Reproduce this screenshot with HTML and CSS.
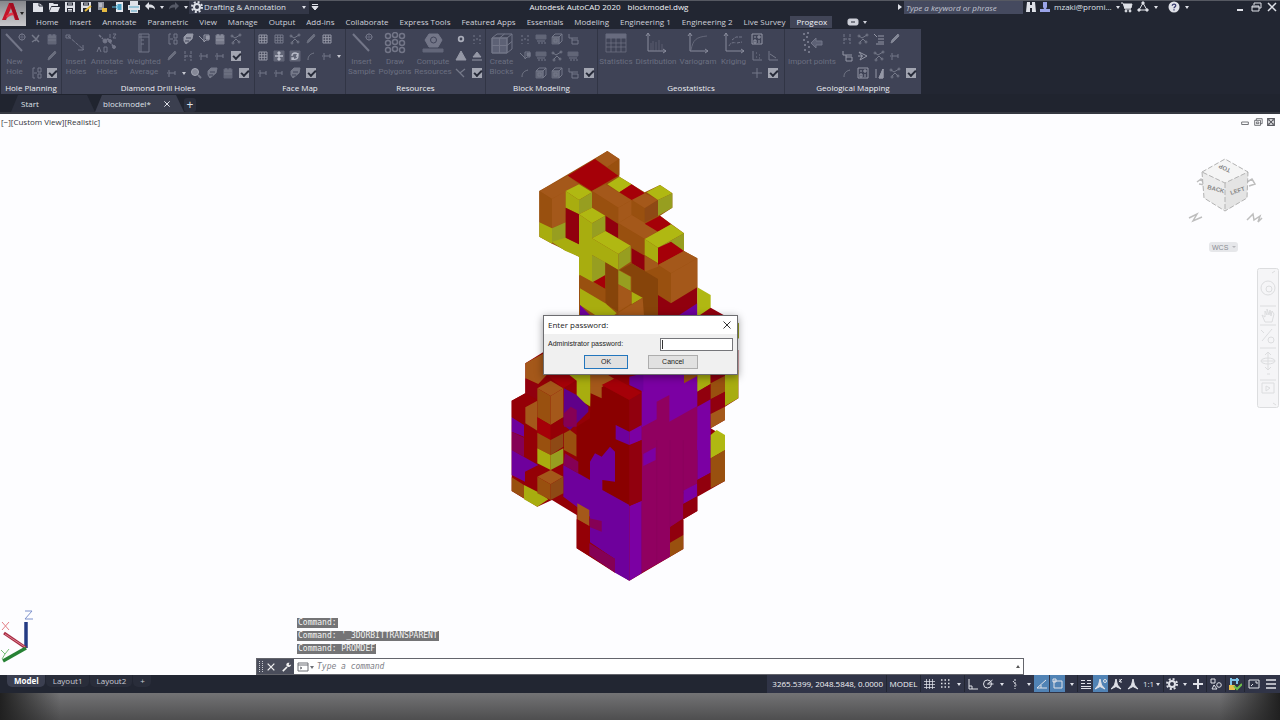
FILE: index.html
```html
<!DOCTYPE html>
<html lang="en">
<head>
<meta charset="utf-8">
<title>Autodesk AutoCAD 2020 - blockmodel.dwg</title>
<link rel="stylesheet" href="styles.css">
</head>
<body>
<svg class="defs" aria-hidden="true">
  <symbol id="i-new" viewBox="0 0 12 12"><path d="M1 2h6l4 3v6H1z" fill="currentColor" stroke="none"/><path d="M7 2v3h4" stroke="#222632"/></symbol>
  <symbol id="i-open" viewBox="0 0 12 12"><path d="M1 10V2h4l1 1h4v2H3.500z M3.500 6H12l-2 5H1.500z" fill="currentColor" stroke="none"/></symbol>
  <symbol id="i-save" viewBox="0 0 12 12"><path d="M1 1h10v10H1z" fill="currentColor" stroke="none"/><path d="M3 1.500h6v3H3zM3 7h6v4H3z" fill="#222632" stroke="none"/><path d="M4 8.500h4M4 10h4M4 3h4"/></symbol>
  <symbol id="i-saveas" viewBox="0 0 12 12"><path d="M1 1h10v10H1z" fill="currentColor" stroke="none"/><path d="M3 1.500h6v3H3zM3 7h6v4H3z" fill="#222632" stroke="none"/><path d="M4 3h4"/><path d="M5 10l6-5" stroke="#e2b83c" stroke-width="2"/></symbol>
  <symbol id="i-web" viewBox="0 0 12 12"><path d="M2 1h6v8H2z" fill="#8f93a0" stroke="none"/><path d="M3 3h3M3 5h3"/><path d="M6 7h5v4H6z" fill="#e6bb42" stroke="none"/></symbol>
  <symbol id="i-mobile" viewBox="0 0 12 12"><path d="M4 1h7v10H4z" fill="#e7e8ee" stroke="none"/><path d="M5.500 3h4v6h-4z" fill="#4aa3c9" stroke="none"/><path d="M0 6h6M4 4l2 2-2 2" stroke="#58b9dd"/></symbol>
  <symbol id="i-print" viewBox="0 0 12 12"><path d="M2 0h8v4H2zM0 4h12v5H0zM2 8h8v4H2z" fill="currentColor" stroke="none"/><path d="M1 6h10M3 10h6" stroke="#53a5c5"/></symbol>
  <symbol id="i-undo" viewBox="0 0 12 12"><path d="M1 5l4-4v2.500c4 0 6 2 6 5C9 6.500 7.500 6.500 5 6.500V9z" fill="currentColor" stroke="none"/></symbol>
  <symbol id="i-redo" viewBox="0 0 12 12"><path d="M11 5L7 1v2.500c-4 0-6 2-6 5 2-2 3.500-2 6-2V9z" fill="currentColor" stroke="none"/></symbol>
  <symbol id="i-gear" viewBox="0 0 12 12"><circle cx="6" cy="6" r="3" stroke-width="2"/><circle cx="6" cy="6" r="5" stroke-width="2" stroke-dasharray="2 1.930"/></symbol>
  <symbol id="i-caret" viewBox="0 0 6 6"><path d="M1 2h4L3 5z" fill="currentColor" stroke="none"/></symbol>
  <symbol id="i-custom" viewBox="0 0 8 8"><path d="M1 1.500h6M1 3.500h6L4 7z" fill="currentColor"/></symbol>
  <symbol id="i-right" viewBox="0 0 6 8"><path d="M1 1l4 3-4 3z" fill="currentColor" stroke="none"/></symbol>
  <symbol id="i-bino" viewBox="0 0 12 12"><path d="M2 1h3v3h2V1h3l1 10H7V7H5v4H1z" fill="currentColor" stroke="none"/></symbol>
  <symbol id="i-user" viewBox="0 0 12 12"><path d="M4 1h4v5l-1 2h4v3H1V8h4L4 6z" fill="#9aa3e8" stroke="none"/></symbol>
  <symbol id="i-cart" viewBox="0 0 12 12"><path d="M0 2h2l2 6h6"/><path d="M3 3h8l-1 4H4z" fill="currentColor"/><circle cx="5" cy="10" r="1" fill="currentColor"/><circle cx="9" cy="10" r="1" fill="currentColor"/></symbol>
  <symbol id="i-app" viewBox="0 0 12 12"><path d="M6 2L2 9h8z"/><path d="M5 1h2v2H5zM1 8h2v2H1zM9 8h2v2H9z" fill="currentColor"/></symbol>
  <symbol id="i-help" viewBox="0 0 12 12"><circle cx="6" cy="6" r="5.500" fill="currentColor" stroke="none"/><path d="M4.300 4.800C4.300 2.500 8 2.700 7.700 4.800 7.500 6 6 5.800 6 7.300M6 8.300v1.200" stroke="#393d70" stroke-width="1.300"/></symbol>
  <symbol id="i-min" viewBox="0 0 12 12"><path d="M3 9h6" stroke-width="2"/></symbol>
  <symbol id="i-restore" viewBox="0 0 12 12"><path d="M4 4V2h7v5H9M2 5h7v5H2zM2 6h7"/></symbol>
  <symbol id="i-x" viewBox="0 0 12 12"><path d="M2 2l8 8M10 2l-8 8" stroke-width="1.500"/></symbol>
  <symbol id="i-video" viewBox="0 0 12 12"><rect x="1" y="3" width="10" height="6" rx="1.500" fill="currentColor"/><path d="M4 6h4" stroke="#222632"/></symbol>

  <symbol id="b-line" viewBox="0 0 22 22"><path d="M2 2l16 17" stroke-width="2"/><circle cx="18" cy="5" r="3"/><path d="M18 1v8M14 5h8" opacity=".6"/></symbol>
  <symbol id="b-insert" viewBox="0 0 22 22"><path d="M3 4l16 14" stroke-dasharray="4 1"/><path d="M1 3h4v3H1zM18 13v5h-5"/></symbol>
  <symbol id="b-annot" viewBox="0 0 22 22"><path d="M3 3l4 4M7 9l5-2 5 7" stroke-width="1.500" stroke-dasharray="3 1"/><circle cx="9" cy="9" r="2" fill="currentColor"/><circle cx="14" cy="9" r="1.500" fill="currentColor"/><circle cx="18" cy="15" r="1.500" fill="currentColor"/><path d="M14 2v4M17 2h3l-3 4h3M1 20l2-5 2 5M8 15v5h3v-5z"/></symbol>
  <symbol id="b-weight" viewBox="0 0 22 22"><path d="M6 2h10v18H6zM6 5h10M8 2v18M8 8h3M8 12h3"/></symbol>
  <symbol id="b-poly" viewBox="0 0 22 22"><g stroke-width="1.500"><circle cx="4" cy="4" r="2.500"/><circle cx="11" cy="3" r="2.500"/><circle cx="18" cy="4" r="2.500"/><circle cx="4" cy="11" r="2.500"/><circle cx="11" cy="10" r="2.500"/><circle cx="18" cy="11" r="2.500"/><circle cx="4" cy="18" r="2.500"/><circle cx="11" cy="17" r="2.500"/><circle cx="18" cy="18" r="2.500"/></g></symbol>
  <symbol id="b-compute" viewBox="0 0 22 22"><path d="M7 2h9l4 6-4 7H7L3 8z" fill="currentColor"/><circle cx="11.500" cy="8" r="3" stroke="#404459"/><path d="M1 17h20v3H1z" fill="currentColor" opacity=".7"/></symbol>
  <symbol id="b-blocks" viewBox="0 0 22 22"><path d="M1 6h15v15H1z" fill="#5d6175"/><path d="M1 6h15v15H1zM8.500 6v15M1 13.500h15M1 6l5-4h15l-5 4M21 2v15l-5 4M8.500 6l5-4M16 13.500l5-4"/></symbol>
  <symbol id="b-table" viewBox="0 0 22 22"><path d="M1 2h20v4H1z" fill="currentColor" opacity=".8"/><path d="M1 6v14h20V6M6 6v14M11 6v14M16 6v14M1 11h20M1 15h20" opacity=".7"/></symbol>
  <symbol id="b-dist" viewBox="0 0 22 22"><path d="M3 1v18h18M1 4l2-3 2 3M18 17l3 2-3 2" stroke="#898c9c"/><path d="M6 19v-8M8 19V9M11 19v-9M14 19V8M17 19v-7" opacity=".5"/></symbol>
  <symbol id="b-vario" viewBox="0 0 22 22"><path d="M3 1v18h18M1 4l2-3 2 3M18 17l3 2-3 2" stroke="#898c9c"/><path d="M4 18C6 8 9 5 20 4" opacity=".7"/></symbol>
  <symbol id="b-krig" viewBox="0 0 22 22"><path d="M3 1v18h18M1 4l2-3 2 3M18 17l3 2-3 2" stroke="#898c9c"/><path d="M6 14c1-3 4-4 7-3M9 8l4-3h7M14 11l5-1" stroke-dasharray="3 1"/></symbol>
  <symbol id="b-import" viewBox="0 0 22 22"><path d="M2 2h2M5 5h2M2 8h2M6 10h2M3 13h2M7 15h2M3 18h2M7 20h2M6 1h2" stroke-width="2"/><path d="M21 9h-6V6l-5 5 5 5v-3h6z" fill="#5d6175"/></symbol>

  <symbol id="s-grid" viewBox="0 0 12 12"><path d="M2 2h8v8H2zM4.700 2v8M7.300 2v8M2 4.700h8M2 7.300h8"/></symbol>
  <symbol id="s-sheet" viewBox="0 0 12 12"><path d="M2 2h8v9H2z" fill="currentColor" opacity=".65"/><path d="M2 4h8M4 1v2M8 1v2M2 7h8"/></symbol>
  <symbol id="s-cut" viewBox="0 0 12 12"><path d="M2 2l7 7M9 2L5 8M2 9l3-2" stroke-width="1.500"/></symbol>
  <symbol id="s-pen" viewBox="0 0 12 12"><path d="M2 10l1-3 6-6 1 2-6 6z" fill="currentColor" opacity=".8"/></symbol>
  <symbol id="s-strip" viewBox="0 0 12 12"><path d="M5 1H3v10h2M8 1h3v4H8zM8 7h3v4H8zM4 6h3"/></symbol>
  <symbol id="s-leaf" viewBox="0 0 12 12"><path d="M2 4l3-3h6l-1 5-6 5-2-3z" fill="currentColor"/><path d="M4 5h5M3 8h4" stroke="#404459"/></symbol>
  <symbol id="s-flag" viewBox="0 0 12 12"><path d="M1 3l5 5M6 2h5v5H8L6 9z"/><path d="M8 3h3v3H8z" fill="currentColor"/></symbol>
  <symbol id="s-nodes" viewBox="0 0 12 12"><path d="M2 3l3 2 5-3M3 9l3-3 3 3" /><circle cx="2" cy="3" r="1"/><circle cx="10" cy="2" r="1"/><circle cx="3" cy="10" r="1"/><circle cx="9" cy="9" r="1"/></symbol>
  <symbol id="s-split" viewBox="0 0 12 12"><path d="M3 1v10M9 1v10M3 6h6" stroke-dasharray="3 1"/></symbol>
  <symbol id="s-move" viewBox="0 0 12 12"><path d="M1 1h10v10H1z" fill="currentColor" opacity=".4"/><path d="M6 2v8M2 6h8M4.500 3.500L6 2l1.500 1.500M4.500 8.500L6 10l1.500-1.500" stroke="#b8bbc8" stroke-width="1.500"/></symbol>
  <symbol id="s-rot" viewBox="0 0 12 12"><path d="M1 1h10v10H1z" fill="currentColor" opacity=".4"/><path d="M3 6c0-4 6-4 6 0M9 7c-1 3-5 3-6 1M9 3v3H7M3 10V8h2" stroke="#b8bbc8" stroke-width="1.300"/></symbol>
  <symbol id="s-zoom" viewBox="0 0 12 12"><circle cx="5" cy="5" r="3.500" fill="#858897" stroke="#a3a6b3"/><path d="M8 8l3 3" stroke-width="2"/></symbol>
  <symbol id="s-cube" viewBox="0 0 12 12"><path d="M1 4h7v7H1z" fill="currentColor" opacity=".7"/><path d="M1 4l3-3h7v7l-3 3V4zM8 4l3-3M3 6h3v3H3z"/></symbol>
  <symbol id="s-ring" viewBox="0 0 12 12"><circle cx="6" cy="6" r="2.300" stroke="#a9acb9" stroke-width="1.800"/></symbol>
  <symbol id="s-tri" viewBox="0 0 12 12"><path d="M6 1l5 9H1z" fill="currentColor"/></symbol>
  <symbol id="s-tri2" viewBox="0 0 12 12"><path d="M6 2l4 5H2zM1 10h10" fill="currentColor"/></symbol>
  <symbol id="s-branch" viewBox="0 0 12 12"><path d="M1 2l4 4 5-4M5 6l4 4" stroke-width="1.300"/></symbol>
  <symbol id="s-dots" viewBox="0 0 12 12"><path d="M3 2v9M9 2v9M5 6h2" stroke-dasharray="2 2"/></symbol>
  <symbol id="s-box" viewBox="0 0 12 12"><path d="M1 2h10v4H1z" fill="currentColor" opacity=".65"/><path d="M2 8h8M4 9v2M7 9v2M10 9v2"/></symbol>
  <symbol id="s-label" viewBox="0 0 12 12"><path d="M2 1v4h3M5 7h6v4H5zM5 7V5h6"/></symbol>
  <symbol id="s-bin" viewBox="0 0 12 12"><path d="M1 1h10v10H1zM4 3v2M7 3h2v2H7zM3 7h2v3H3zM8 7v3"/></symbol>
  <symbol id="s-axis" viewBox="0 0 12 12"><path d="M2 1v9h9M5 7h1M8 5h1M5 3h1M8 8h1"/></symbol>
  <symbol id="s-axis2" viewBox="0 0 12 12"><path d="M2 1v9h9M3 4l6 4"/></symbol>
  <symbol id="s-cross" viewBox="0 0 12 12"><path d="M6 1v10M1 6h10"/></symbol>
  <symbol id="s-list" viewBox="0 0 12 12"><path d="M1 1l3 3M5 3h6M5 6h6M5 9h6M3 11h8"/></symbol>
  <symbol id="s-arrow" viewBox="0 0 12 12"><path d="M2 2l8 4-7 4 2-4zM1 6h5" /></symbol>
  <symbol id="s-peak" viewBox="0 0 12 12"><path d="M10 2v9H6zM3 2v9"/><path d="M10 2v9H6z" fill="currentColor"/></symbol>
  <symbol id="s-curve" viewBox="0 0 12 12"><path d="M3 10c0-4 2-6 6-7"/></symbol>
  <symbol id="s-h" viewBox="0 0 12 12"><path d="M3 3v7M3 6h6M9 4v4M1 6h1"/></symbol>

  <symbol id="t-grid" viewBox="0 0 12 12"><path d="M3.500 1v10M6.500 1v10M9.500 1v10M1 3.500h11M1 6.500h11M1 9.500h11" opacity=".75"/></symbol>
  <symbol id="t-dots" viewBox="0 0 12 12"><path d="M2 2h9M2 5.500h9M2 9h9" stroke-dasharray="1.500 2" stroke-width="1.500"/></symbol>
  <symbol id="t-ortho" viewBox="0 0 12 12"><path d="M2 1v10h9M2 8h3v3"/></symbol>
  <symbol id="t-polar" viewBox="0 0 12 12"><circle cx="5.500" cy="6" r="4"/><path d="M5.500 6h6M5.500 6l5-4"/></symbol>
  <symbol id="t-iso" viewBox="0 0 12 12"><path d="M6 1v10M4 3l4 5" stroke-dasharray="2 1"/></symbol>
  <symbol id="t-track" viewBox="0 0 12 12"><path d="M1 10h10M1 10l9-8M5 7v3"/></symbol>
  <symbol id="t-osnap" viewBox="0 0 12 12"><path d="M2 3h8v7H2zM1 1h3v3H1z"/></symbol>
  <symbol id="t-lines" viewBox="0 0 12 12"><path d="M1 2.500h4M1 5.500h4M1 8.500h4M7 2.500h4M7 5.500h4M5 8.500h6"/><path d="M1 10.500h10"/></symbol>
  <symbol id="t-anno" viewBox="0 0 12 12"><path d="M6 1l1.500 6L11 11 6 8.500 1 11l3.500-4z" fill="currentColor"/></symbol>
  <symbol id="t-anno2" viewBox="0 0 12 12"><path d="M5 1l1.500 6L10 11 5 8.500 0 11l3.500-4z" fill="currentColor"/><circle cx="10" cy="3" r="1.500"/></symbol>
  <symbol id="t-anno3" viewBox="0 0 12 12"><path d="M5 1l1.500 6L10 11 5 8.500 0 11l3.500-4z" fill="currentColor"/><path d="M8 4l3-3M9 1v3h2"/></symbol>
  <symbol id="t-shapes" viewBox="0 0 12 12"><path d="M1 1h4v4H1zM4 7l3 4H2z"/><circle cx="9" cy="7" r="2.300"/></symbol>
  <symbol id="t-perf" viewBox="0 0 14 14"><path d="M2 3h9M3 1v12M9 1v6" stroke="#7ec3e8" stroke-width="2"/><path d="M1 8h6v5H1z" fill="#e7bf4d" stroke="none"/><path d="M6 9l3 3 5-5" stroke="#6cc04a" stroke-width="2"/></symbol>
  <symbol id="t-full" viewBox="0 0 12 12"><path d="M1 2h10v8H1zM3 8l2-2M7 4h2v2"/></symbol>
  <symbol id="t-menu" viewBox="0 0 12 12"><path d="M1 2h10M1 6h10M1 10h10" stroke-width="1.500"/></symbol>
  <symbol id="t-wrench" viewBox="0 0 12 12"><path d="M1 11l5-5" stroke-width="2"/><path d="M7 1c-3 1-2 5 1 5 2 0 3-2 3-3L9 4 8 3l1-2z" fill="currentColor" stroke="none"/></symbol>
</svg>

<header class="top">
  <button class="logo" aria-label="Application menu">
    <svg class="logo-mark" viewBox="0 0 26 26"><path d="M2 19L9 2h4l6 17h-4l-4-12-5 12z" fill="#c4152b"/><path d="M6 15c4-4 7-4 9-3l1 3c-4-2-7 0-9 2z" fill="#e2384a"/><path d="M9 2h4l6 17h-3z" fill="#a10d20"/><path d="M20 11h4l-2 3z" fill="#222"/></svg>
  </button>
  <div class="titlebar">
    <div class="quick">
      <button aria-label="New"><svg><use href="#i-new"/></svg></button>
      <button aria-label="Open"><svg><use href="#i-open"/></svg></button>
      <button aria-label="Save"><svg><use href="#i-save"/></svg></button>
      <button aria-label="Save as"><svg><use href="#i-saveas"/></svg></button>
      <button aria-label="Open from web"><svg><use href="#i-web"/></svg></button>
      <button aria-label="Save to mobile"><svg><use href="#i-mobile"/></svg></button>
      <button aria-label="Plot"><svg><use href="#i-print"/></svg></button>
      <button aria-label="Undo"><svg><use href="#i-undo"/></svg></button>
      <button class="drop" aria-label="Undo list"><svg><use href="#i-caret"/></svg></button>
      <button class="faded" aria-label="Redo"><svg><use href="#i-redo"/></svg></button>
      <button class="drop" aria-label="Redo list"><svg><use href="#i-caret"/></svg></button>
      <label class="workspace"><svg><use href="#i-gear"/></svg>
        <select aria-label="Workspace"><option>Drafting &amp; Annotation</option></select>
        <svg class="tiny"><use href="#i-caret"/></svg></label>
      <button class="drop" aria-label="Customize"><svg class="eight"><use href="#i-custom"/></svg></button>
    </div>
    <h1 class="title"><span>Autodesk AutoCAD 2020</span><span>blockmodel.dwg</span></h1>
    <div class="info">
      <button class="drop" aria-label="Collapse search"><svg class="eight"><use href="#i-right"/></svg></button>
      <input class="search" type="search" placeholder="Type a keyword or phrase" aria-label="Search">
      <button aria-label="Find"><svg><use href="#i-bino"/></svg></button>
      <button class="account"><svg><use href="#i-user"/></svg><span>mzaki@promi...</span><svg class="tiny"><use href="#i-caret"/></svg></button>
      <button aria-label="Store"><svg><use href="#i-cart"/></svg></button>
      <button aria-label="App store"><svg><use href="#i-app"/></svg></button>
      <button class="drop" aria-label="App list"><svg><use href="#i-caret"/></svg></button>
      <button class="help" aria-label="Help"><svg><use href="#i-help"/></svg></button>
      <button class="drop" aria-label="Help list"><svg><use href="#i-caret"/></svg></button>
      <div class="window">
        <button aria-label="Minimize"><svg><use href="#i-min"/></svg></button>
        <button aria-label="Restore"><svg><use href="#i-restore"/></svg></button>
        <button aria-label="Close"><svg><use href="#i-x"/></svg></button>
      </div>
    </div>
  </div>
  <nav class="tabs">
    <button>Home</button><button>Insert</button><button>Annotate</button><button>Parametric</button><button>View</button><button>Manage</button><button>Output</button><button>Add-ins</button><button>Collaborate</button><button>Express Tools</button><button>Featured Apps</button><button>Essentials</button><button>Modeling</button><button>Engineering 1</button><button>Engineering 2</button><button>Live Survey</button><button class="active">Progeox</button>
    <button class="media" aria-label="Ribbon display"><svg><use href="#i-video"/></svg><svg class="tiny"><use href="#i-caret"/></svg></button>
  </nav>
</header>

<section class="ribbon">
  <section class="panel p-hole">
    <div class="tools">
      <button class="big w27"><svg><use href="#b-line"/></svg>New<br>Hole</button>
      <div class="small">
        <div><button aria-label="Trim"><svg><use href="#s-cut"/></svg></button><button aria-label="Sheet"><svg><use href="#s-sheet"/></svg></button></div>
        <div class="end"><button aria-label="Edit"><svg><use href="#s-pen"/></svg></button></div>
        <div><button aria-label="List"><svg><use href="#s-strip"/></svg></button><input type="checkbox" checked aria-label="Hole planning options"></div>
      </div>
    </div>
    <h2>Hole Planning</h2>
  </section>
  <section class="panel p-drill">
    <div class="tools">
      <button class="big w28"><svg><use href="#b-insert"/></svg>Insert<br>Holes</button>
      <button class="big w34"><svg><use href="#b-annot"/></svg>Annotate<br>Holes</button>
      <button class="big w40"><svg><use href="#b-weight"/></svg>Weighted<br>Average</button>
      <div class="small">
        <div><button aria-label="Strip log"><svg><use href="#s-strip"/></svg></button><button class="lit" aria-label="Layers"><svg><use href="#s-leaf"/></svg></button><button class="lit" aria-label="Flag"><svg><use href="#s-flag"/></svg></button><button class="lit" aria-label="Sheet"><svg><use href="#s-sheet"/></svg></button><button aria-label="Nodes"><svg><use href="#s-nodes"/></svg></button></div>
        <div><button aria-label="Edit"><svg><use href="#s-pen"/></svg></button><button aria-label="Columns"><svg><use href="#s-split"/></svg></button><button aria-label="Join"><svg><use href="#s-h"/></svg></button><button aria-label="Detach"><svg><use href="#s-h"/></svg></button><input type="checkbox" checked aria-label="Show traces"></div>
        <div><button aria-label="Dash"><svg><use href="#s-h"/></svg></button><button class="drop" aria-label="Dash list"><svg><use href="#i-caret"/></svg></button><button aria-label="Zoom"><svg><use href="#s-zoom"/></svg></button><button aria-label="Surface"><svg><use href="#s-leaf"/></svg></button><button aria-label="Report"><svg><use href="#s-sheet"/></svg></button><input type="checkbox" checked aria-label="Drill hole options"></div>
      </div>
    </div>
    <h2>Diamond Drill Holes</h2>
  </section>
  <section class="panel p-face">
    <div class="tools">
      <div class="small">
        <div><button class="lit" aria-label="Grid"><svg><use href="#s-grid"/></svg></button><button aria-label="Grid lines"><svg><use href="#s-grid"/></svg></button><button aria-label="Grid angle"><svg><use href="#s-nodes"/></svg></button><button aria-label="Draw"><svg><use href="#s-pen"/></svg></button><button class="lit" aria-label="Cells"><svg><use href="#s-grid"/></svg></button></div>
        <div><button class="lit" aria-label="Table"><svg><use href="#s-grid"/></svg></button><button class="lit" aria-label="Move"><svg><use href="#s-move"/></svg></button><button class="lit" aria-label="Rotate"><svg><use href="#s-rot"/></svg></button><button aria-label="Split"><svg><use href="#s-curve"/></svg></button><button aria-label="Line"><svg><use href="#s-h"/></svg></button><button class="drop" aria-label="Line list"><svg><use href="#i-caret"/></svg></button></div>
        <div><button aria-label="Start"><svg><use href="#s-h"/></svg></button><button aria-label="End"><svg><use href="#s-h"/></svg></button><button aria-label="Face"><svg><use href="#s-leaf"/></svg></button><input type="checkbox" checked aria-label="Face map options"></div>
      </div>
    </div>
    <h2>Face Map</h2>
  </section>
  <section class="panel p-res">
    <div class="tools">
      <button class="big w31"><svg><use href="#b-line"/></svg>Insert<br>Sample</button>
      <button class="big w36"><svg><use href="#b-poly"/></svg>Draw<br>Polygons</button>
      <button class="big w40"><svg><use href="#b-compute"/></svg>Compute<br>Resources</button>
      <div class="small">
        <div><button aria-label="Ring"><svg><use href="#s-ring"/></svg></button><button aria-label="Points"><svg><use href="#s-dots"/></svg></button></div>
        <div><button class="lit" aria-label="Triangle"><svg><use href="#s-tri"/></svg></button><button class="lit" aria-label="Eject"><svg><use href="#s-tri2"/></svg></button></div>
        <div><button aria-label="Branch"><svg><use href="#s-branch"/></svg></button><input type="checkbox" checked aria-label="Resource options"></div>
      </div>
    </div>
    <h2>Resources</h2>
  </section>
  <section class="panel p-block">
    <div class="tools">
      <button class="big w31"><svg><use href="#b-blocks"/></svg>Create<br>Blocks</button>
      <div class="small">
        <div><button aria-label="Range"><svg><use href="#s-dots"/></svg></button><button aria-label="Box"><svg><use href="#s-box"/></svg></button><button aria-label="Cube"><svg><use href="#s-cube"/></svg></button><button aria-label="Label"><svg><use href="#s-label"/></svg></button></div>
        <div><button aria-label="Tag"><svg><use href="#s-flag"/></svg></button><button aria-label="Box values"><svg><use href="#s-box"/></svg></button><button aria-label="Vectors"><svg><use href="#s-nodes"/></svg></button><button aria-label="Link"><svg><use href="#s-box"/></svg></button></div>
        <div><button aria-label="Star"><svg><use href="#s-curve"/></svg></button><button aria-label="Solid"><svg><use href="#s-cube"/></svg></button><button aria-label="Shells"><svg><use href="#s-cube"/></svg></button><button aria-label="Column"><svg><use href="#s-label"/></svg></button><input type="checkbox" checked aria-label="Block options"></div>
      </div>
    </div>
    <h2>Block Modeling</h2>
  </section>
  <section class="panel p-geo">
    <div class="tools">
      <button class="big w36"><svg><use href="#b-table"/></svg>Statistics</button>
      <button class="big w44"><svg><use href="#b-dist"/></svg>Distribution</button>
      <button class="big w40"><svg><use href="#b-vario"/></svg>Variogram</button>
      <button class="big w31"><svg><use href="#b-krig"/></svg>Kriging</button>
      <div class="small">
        <div><button class="lit" aria-label="Indicator"><svg><use href="#s-bin"/></svg></button></div>
        <div><button aria-label="Scatter"><svg><use href="#s-axis"/></svg></button><button aria-label="Regression"><svg><use href="#s-axis2"/></svg></button></div>
        <div><button aria-label="Add"><svg><use href="#s-cross"/></svg></button><input type="checkbox" checked aria-label="Geostatistics options"></div>
      </div>
    </div>
    <h2>Geostatistics</h2>
  </section>
  <section class="panel p-map">
    <div class="tools">
      <button class="big w54"><svg><use href="#b-import"/></svg>Import points</button>
      <div class="small">
        <div><button aria-label="Fault"><svg><use href="#s-split"/></svg></button><button aria-label="Strike"><svg><use href="#s-nodes"/></svg></button><button class="lit" aria-label="Legend"><svg><use href="#s-list"/></svg></button><button class="lit" aria-label="Sketch"><svg><use href="#s-pen"/></svg></button></div>
        <div><button class="lit" aria-label="Annotate fault"><svg><use href="#s-label"/></svg></button><button class="lit" aria-label="Plane"><svg><use href="#s-arrow"/></svg></button><button aria-label="Dip"><svg><use href="#s-nodes"/></svg></button><button aria-label="Width"><svg><use href="#s-h"/></svg></button></div>
        <div><button aria-label="Curve"><svg><use href="#s-curve"/></svg></button><button class="lit" aria-label="Frame"><svg><use href="#s-bin"/></svg></button><button class="lit" aria-label="Mirror"><svg><use href="#s-peak"/></svg></button><button aria-label="Points"><svg><use href="#s-nodes"/></svg></button><input type="checkbox" checked aria-label="Mapping options"></div>
      </div>
    </div>
    <h2>Geological Mapping</h2>
  </section>
</section>

<nav class="files">
  <button class="file">Start</button>
  <button class="file active">blockmodel*<svg><use href="#i-x"/></svg></button>
  <button class="plus" aria-label="New drawing">+</button>
</nav>

<main class="viewport">
  <div class="viewbar">
    <span>[−][Custom View][Realistic]</span>
    <div class="viewbuttons">
      <button aria-label="Minimize view"><svg viewBox="0 0 12 12"><path d="M2 6h8v3H2z"/></svg></button>
      <button aria-label="Restore view"><svg viewBox="0 0 12 12"><path d="M2 4h7v6H2zM4 4V2h7v6H9M4 6h3v2H4z"/></svg></button>
      <button aria-label="Close view"><svg viewBox="0 0 12 12"><path d="M2 2h8v8H2zM3 3l6 6M9 3L3 9" stroke-width="1.400"/></svg></button>
    </div>
  </div>

  <svg class="model" viewBox="0 0 750 1320" role="img" aria-label="Block model">
    <g>
      <path class="o2" d="M118 138L322 18 358 42 358 95 434 142 480 120 517 145 517 188 480 212 552 265 552 318 592 340 592 540 237 540 237 335 156 296 118 275z"/>
      <path class="o1" d="M285 42L322 18 358 42 322 66z"/><path class="o2" d="M322 66L358 42 358 90z"/>
      <path class="r1" d="M203 92L285 42 355 92 275 138z"/>
      <path class="o1" d="M118 138L203 92 237 118 156 162z"/><path class="o2" d="M118 138L156 162 156 250 118 232z"/><path class="o1" d="M156 162L197 138 197 232 156 250z"/>
      <path class="y2" d="M118 232L156 250 156 296 118 275z"/><path class="y3" d="M156 250L197 232 197 318 156 292z"/>
      <path class="y2" d="M156 290L197 278 237 298 237 335 197 318z"/>
      <path class="y1" d="M197 138L237 118 276 142 237 165z"/><path class="y2" d="M197 138L237 165 237 208 197 188z"/><path class="y3" d="M237 165L276 142 276 188 237 208z"/>
      <path class="r3" d="M197 188L237 208 237 298 197 278z"/>
      <path class="o1" d="M276 138L316 118 395 165 355 188z"/><path class="o2" d="M276 138L355 188 355 235 276 190z"/>
      <path class="r3" d="M316 212L355 237 355 280 316 258z"/>
      <path class="y1" d="M322 118L358 95 395 118 358 142z"/><path class="r1" d="M358 142L395 118 434 145 400 168z"/>
      <path class="o1" d="M355 188L395 165 395 210 355 235z"/><path class="o1" d="M395 165L434 145 474 165 434 190z"/><path class="o2" d="M395 165L434 190 434 232 395 210z"/><path class="o3" d="M434 190L474 165 474 212 434 232z"/>
      <path class="y1" d="M440 142L480 120 517 145 474 165z"/><path class="y3" d="M474 165L517 145 517 188 474 212z"/>
      <path class="o1" d="M355 235L395 210 474 258 434 282z"/><path class="o2" d="M355 235L434 282 434 330 355 280z"/>
      <path class="r1" d="M434 236L480 212 513 238 474 260z"/>
      <path class="y1" d="M434 282L513 238 552 265 474 308z"/><path class="y2" d="M434 282L474 308 474 355 434 330z"/><path class="y3" d="M474 308L552 265 552 318 474 355z"/>
      <path class="r1" d="M474 308L513 290 552 318 474 360z"/>
      <path class="r3" d="M395 310L434 332 434 378 395 355z"/><path class="o1" d="M434 332L474 355 474 365 434 380z"/>
      <path class="o4" d="M360 375L395 355 513 425 474 450 474 540 395 540 395 395z"/>
      <path class="o1" d="M474 360L552 318 592 340 513 385z"/><path class="o2" d="M474 360L513 385 513 475 474 450z"/><path class="o1" d="M513 385L592 340 592 427 513 475z"/>
      <path class="y1" d="M237 208L276 188 316 212 276 235z"/><path class="y2" d="M237 208L276 235 276 412 237 390z"/><path class="y3" d="M276 235L316 212 316 258 276 280z"/>
      <path class="y1" d="M276 280L316 258 392 302 355 327z"/><path class="y2" d="M276 280L355 327 355 375 276 330z"/><path class="y3" d="M355 327L392 302 392 350 355 375z"/>
      <path class="y3" d="M276 330L316 352 316 400 276 412z"/>
      <path class="r1" d="M280 410L316 390 316 432z"/><path class="o4" d="M316 352L355 375 355 500 316 476z"/>
      <path class="o2" d="M240 390L316 432 316 476 240 430z"/>
      <path class="y3" d="M355 375L392 395 392 438 355 418z"/><path class="o1" d="M355 418L395 440 395 475 355 500z"/><path class="y2" d="M395 440L428 458 395 478z"/>
      <path class="y2" d="M240 430L316 475 350 505 316 530 240 480z"/><path class="p2" d="M240 480L290 530 240 530z"/>
      <path class="o1" d="M355 503L428 458 434 540 355 540z"/>
      <path class="r3" d="M474 450L513 475 592 427 592 540 474 540z"/><path class="p2" d="M530 515L592 475 592 540 530 540z"/>
      <path class="y1" d="M592 427L632 450 632 495 592 520z"/><path class="r3" d="M600 510L632 488 715 535 715 560 600 560z"/>
      <path class="y3" d="M705 540L717 533 717 580 705 585z"/>
    </g>
    <g transform="translate(0 495)">
      <path class="r2" d="M76 160L140 120 715 120 715 265 675 290 675 330 632 355 675 380 675 513 592 560 592 603 550 628 550 717 388 812 230 715 230 615 156 570 112 590 35 543 35 272 76 250z"/>
      <path class="o1" d="M76 160L140 125 140 195 115 222 76 205z"/><path class="r3" d="M76 205L115 225 115 270 76 250z"/>
      <path class="r1" d="M140 195L200 190 230 210 190 235z"/>
      <path class="y2" d="M196 185L272 185 272 290 230 265 230 212z"/>
      <path class="p3" d="M192 235L230 255 265 290 265 305 210 360 190 345z"/><path class="m2" d="M192 310L212 290 230 300 230 350 192 350z"/>
      <path class="r2" d="M35 272L76 250 112 272 76 292 76 345 35 322z"/>
      <path class="o1" d="M76 292L112 272 112 362 76 340z"/>
      <path class="p2" d="M35 322L72 345 72 380 35 365z"/><path class="m2" d="M35 365L72 383 72 440 35 420z"/>
      <path class="o1" d="M112 235L152 212 190 235 152 258z"/><path class="o2" d="M112 235L152 258 152 345 112 322z"/><path class="o1" d="M152 258L190 235 190 322 152 345z"/>
      <path class="r1" d="M112 322L152 345 152 390 112 368z"/><path class="r2" d="M152 345L190 322 190 370 152 390z"/>
      <path class="o2" d="M112 368L152 390 152 435 112 415z"/><path class="o3" d="M152 390L190 370 190 410 152 435z"/><path class="o2" d="M192 370L210 360 230 375 230 440 192 420z"/>
      <path class="r4" d="M272 250L305 225 388 270 388 585 307 540 307 510 270 510 230 485 230 350 270 325z"/>
      <path class="o1" d="M272 195L316 190 345 208 305 232 305 265 272 250z"/>
      <path class="r1" d="M305 225L345 205 425 248 388 270z"/><path class="r3" d="M388 270L425 248 425 345 388 365z"/>
      <path class="p1" d="M425 180L592 180 592 215 632 268 632 420 592 420 425 430z"/><path class="p2" d="M388 200L430 190 430 245 388 225z"/>
      <path class="m1" d="M425 352L470 328 470 275 508 255 508 335 592 288 592 520 550 545 550 625 510 652 510 740 425 788z"/>
      <path class="p2" d="M347 345L388 365 388 405 347 388z"/><path class="p1" d="M388 365L425 345 425 390 388 405z"/>
      <path class="o2" d="M552 192L592 190 592 198 552 220z"/><path class="y2" d="M592 190L632 190 632 222 592 245z"/><path class="r3" d="M592 245L632 222 632 268 592 290z"/>
      <path class="r3" d="M632 185L675 185 675 198 632 220z"/><path class="o2" d="M632 220L675 197 675 245 632 268z"/><path class="y2" d="M675 180L715 180 715 265 675 288z"/><path class="r3" d="M632 268L675 245 675 290 632 312z"/><path class="o1" d="M632 312L675 290 675 330 632 355z"/>
      <path class="y1" d="M632 375L650 360 675 375 675 420 632 445z"/>
    </g>
    <g transform="translate(0 885)">
      <path class="p2" d="M35 30L115 75 75 95 75 125 35 105z"/><path class="o2" d="M35 112L72 135 72 175 35 153z"/><path class="y2" d="M72 135L112 155 145 178 112 200 72 178z"/>
      <path class="y2" d="M112 25L152 45 152 90 112 70z"/><path class="y3" d="M152 45L190 25 190 70 152 90z"/>
      <path class="m2" d="M195 40L235 65 235 100 190 75z"/>
      <path class="p2" d="M190 75L270 120 270 65 285 40 305 50 330 20 345 35 345 125 307 120 307 150 388 195 388 422 345 398 345 358 270 310 270 230 190 170z"/>
      <path class="p1" d="M388 198L425 182 425 400 388 422z"/><path class="r3" d="M388 18L425 0 425 182 388 198z"/>
      <path class="o1" d="M112 110L152 90 190 110 152 133z"/><path class="o2" d="M112 110L152 133 152 180 112 160z"/><path class="o3" d="M152 133L190 110 190 160 152 180z"/>
      <path class="o1" d="M232 190L268 210 268 258 232 238z"/><path class="m2" d="M268 235L305 243 305 275 270 262z"/>
      <path class="r2" d="M230 238L268 260 268 305 345 358 345 398 230 325z"/><path class="m2" d="M268 310L345 356 345 398 268 345z"/>
      <path class="p1" d="M430 42L467 22 467 60 430 78z"/><path class="p1" d="M592 0L632 0 632 98 592 120z"/><path class="p1" d="M550 152L592 130 592 168 550 192z"/>
      <path class="r3" d="M592 120L632 98 632 145 592 168zM550 192L592 170 592 213 550 238zM510 262L550 240 550 285 510 308z"/>
      <path class="o2" d="M510 308L550 285 550 327 510 350z"/><path class="y1" d="M632 0L675 0 675 30 632 55z"/><path class="o2" d="M632 55L675 30 675 123 632 145z"/>
      <path class="m3" d="M470 0V372M510 0V265M550 0V160"/>
    </g>
  </svg>

  <svg class="viewcube" viewBox="0 0 80 100" role="img" aria-label="View cube">
    <path d="M12 26l4-3 4 6-6-1M62 26l5-3 3 5-6 2" class="cube-mark"/>
    <path d="M17 16L40 3l23 13-23 11z" fill="#f5f5f5"/><path d="M17 16l23 11v28L19 42z" fill="#ececec"/><path d="M63 16L40 27v28l22-13z" fill="#e4e4e4"/>
    <path d="M17 16L40 3l23 13-23 11zM17 16l2 26 21 13 22-13 1-26M40 27v28" class="cube-edge"/>
    <text x="22" y="33" transform="rotate(14 22 33)">BACK</text><text x="46" y="39" transform="rotate(-18 46 39)">LEFT</text><text x="46" y="13" transform="rotate(205 46 13)">TOP</text>
    <path d="M4 62l8-4-4 7 9-4M62 64l6-6 1 6 6-4-2 6 4-4" class="cube-mark"/>
    <rect x="24" y="86" width="29" height="10" rx="3" fill="#e6e7ea"/><text class="wcs" x="27" y="94">WCS</text><path d="M47 90h4l-2 2z" fill="#b5b6ba"/>
  </svg>

  <svg class="navbar" viewBox="0 0 22 140" role="img" aria-label="Navigation bar">
    <rect x=".5" y=".5" width="21" height="139" rx="2"/><path d="M15 5l3-2M3 38h16M3 57h16M3 80h16M3 112h16"/><circle cx="11" cy="20" r="7"/><circle cx="12" cy="21" r="3"/><path d="M5 47l3 7h7l2-8-2-3-1 5-1-6-1 5-2-6v6l-2-4v6zM5 73l10-12M4 62l3 3"/><circle cx="14" cy="72" r="3"/><path d="M11 84v18M4 93h14M8 87l3-3 3 3M8 99l3 3 3-3"/><ellipse cx="11" cy="93" rx="7" ry="3"/><path d="M5 115h12v10H5zM9 118l4 2-4 3zM10 106h3M16 135l3 2"/>
  </svg>

  <svg class="ucs" viewBox="0 0 40 56" role="img" aria-label="UCS icon">
    <path d="M26 39V13" stroke="#243b84" stroke-width="3.500"/><path d="M26 39L4 24" stroke="#a72b42" stroke-width="3"/><path d="M26 39L3 52" stroke="#278235" stroke-width="3.500"/><path d="M25 38L5 25" stroke="#dc8293"/>
    <path d="M25 2h7l-7 8h8" stroke="#7d91cc"/><path d="M2 13l7 8M9 13l-7 8" stroke="#e47e85"/><path d="M1 41l4 4 4-5M5 45l-3 5" stroke="#75bf78"/>
  </svg>

  <form class="dialog" onsubmit="return false">
    <div class="dialog-title"><h2>Enter password:</h2><button type="button" class="dialog-x" aria-label="Close"><svg viewBox="0 0 12 12"><path d="M2.500 2.500l7 7M9.500 2.500l-7 7"/></svg></button></div>
    <div class="dialog-body">
      <div class="field"><label for="pw">Administrator password:</label><input id="pw" type="password"></div>
      <div class="actions"><button class="ok">OK</button><button type="button" class="cancel">Cancel</button></div>
    </div>
  </form>

  <div class="command">
    <div class="history"><span>Command:</span><span>Command: '_3DORBITTRANSPARENT</span><span>Command: PROMDEF</span></div>
    <div class="cmdline">
      <div class="handle"><i></i><button aria-label="Close command line"><svg><use href="#i-x"/></svg></button><button aria-label="Customize command line"><svg><use href="#t-wrench"/></svg></button></div>
      <button class="recent" aria-label="Recent commands"><svg viewBox="0 0 12 12"><path d="M1 2h10v8H1zM1 4h10M3 6l2 1-2 1"/></svg><svg class="tiny"><use href="#i-caret"/></svg></button>
      <input type="text" placeholder="Type a command" aria-label="Command">
      <button class="expand" aria-label="Expand history"><svg class="tiny up"><use href="#i-caret"/></svg></button>
    </div>
  </div>
</main>

<footer class="status">
  <nav class="layouts"><button class="active">Model</button><button>Layout1</button><button>Layout2</button><button>+</button></nav>
  <div class="state">
    <button class="coords">3265.5399, 2048.5848, 0.0000</button>
    <button class="space">MODEL</button>
    <button aria-label="Grid"><svg><use href="#t-grid"/></svg></button>
    <button aria-label="Snap"><svg><use href="#t-dots"/></svg></button>
    <button class="drop" aria-label="Snap list"><svg><use href="#i-caret"/></svg></button>
    <button class="rule" aria-label="Ortho"><svg><use href="#t-ortho"/></svg></button>
    <button aria-label="Polar"><svg><use href="#t-polar"/></svg></button>
    <button class="drop" aria-label="Polar list"><svg><use href="#i-caret"/></svg></button>
    <button aria-label="Isometric"><svg><use href="#t-iso"/></svg></button>
    <button class="drop" aria-label="Isometric list"><svg><use href="#i-caret"/></svg></button>
    <button class="on" aria-label="Tracking"><svg><use href="#t-track"/></svg></button>
    <button class="on" aria-label="Object snap"><svg><use href="#t-osnap"/></svg></button>
    <button class="drop" aria-label="Object snap list"><svg><use href="#i-caret"/></svg></button>
    <button class="rule" aria-label="Lineweight"><svg><use href="#t-lines"/></svg></button>
    <button class="on" aria-label="Annotation visibility"><svg><use href="#t-anno2"/></svg></button>
    <button aria-label="Auto scale"><svg><use href="#t-anno3"/></svg></button>
    <button aria-label="Annotation scale"><svg><use href="#t-anno"/></svg></button>
    <button class="scale">1:1<svg class="tiny"><use href="#i-caret"/></svg></button>
    <button class="rule" aria-label="Settings"><svg><use href="#i-gear"/></svg></button>
    <button class="drop" aria-label="Settings list"><svg><use href="#i-caret"/></svg></button>
    <button aria-label="Monitor"><svg><use href="#s-cross" stroke-width="2"/></svg></button>
    <button class="last" aria-label="Isolate"><svg><use href="#t-shapes"/></svg></button>
    <button class="last" aria-label="Performance"><svg class="color"><use href="#t-perf"/></svg></button>
    <button class="last" aria-label="Clean screen"><svg><use href="#t-full"/></svg></button>
    <button aria-label="Customization"><svg><use href="#t-menu"/></svg></button>
  </div>
</footer>
<div class="desk"></div>
</body>
</html>
```

FILE: styles.css
```css
* { box-sizing: border-box; }
body {
  margin: 0;
  min-height: 100vh;
  display: flex;
  flex-direction: column;
  background: #222632;
  color: #dfe1e8;
  font: 8px/12px "Open Sans", "Noto Sans", sans-serif;
  overflow-x: hidden;
}
button, input, select {
  font: inherit;
  color: inherit;
  background: none;
  border: 0;
  padding: 0;
  margin: 0;
  border-radius: 0;
}
button {
  display: flex;
  align-items: center;
  justify-content: center;
  white-space: nowrap;
}
h1, h2 { margin: 0; font: inherit; }
svg {
  width: 12px;
  height: 12px;
  flex: none;
  fill: none;
  stroke: currentColor;
}
svg.tiny, .drop svg { width: 6px; height: 6px; }
.drop svg.eight { width: 8px; height: 8px; }
.defs { position: absolute; width: 0; height: 0; }

/* title bar and menu tabs */
.top {
  display: grid;
  grid-template-columns: 26px 1fr;
  grid-template-rows: 15px 13px;
  border-top: 1px solid #565962;
  height: 29px;
}
.logo {
  grid-row: 1 / 3;
  width: 26px;
  height: 25px;
  background: linear-gradient(#85868b, #c9c9cc);
}
.logo-mark { width: 26px; height: 26px; stroke: none; }
.titlebar { display: flex; align-items: center; height: 12px; }
.quick { display: flex; align-items: center; padding-left: 4px; width: 297px; }
.quick button { width: 16px; }
.quick .drop { width: 7px; }
.quick .faded { color: #555966; width: 17px; }
.workspace {
  display: flex;
  align-items: center;
  width: 120px;
  height: 13px;
  padding: 0 2px;
  margin-right: 2px;
  background: #333747;
}
.workspace select { flex: 1; appearance: none; height: 12px; line-height: 12px; margin-left: 1px; }
.title { flex: 1; display: flex; justify-content: center; gap: 7px; color: #f0f1f5; white-space: nowrap; }
.info { display: flex; align-items: center; width: 385px; }
.info button { width: 16px; }
.info .drop { width: 9px; }
.search {
  width: 119px;
  height: 13px;
  padding: 0 2px;
  background: #454a5f;
  font-style: italic;
}
.search::placeholder { color: #c3c6d2; opacity: 1; }
.info .account { width: 80px; gap: 3px; justify-content: flex-start; }
.account span { flex: 1; text-align: left; }
.info .help { margin-left: 6px; }
.window { display: flex; margin-left: auto; }

.tabs { display: flex; align-items: center; padding-left: 4px; height: 12px; }
.tabs button { padding: 0 5px 0 6px; height: 12px; color: #cfd1da; }
.tabs .active { background: #414557; color: #f2f3f7; }
.tabs .media { margin-left: 9px; gap: 3px; }

/* ribbon */
.ribbon { display: flex; height: 65px; padding-left: 1px; }
.panel {
  display: flex;
  flex-direction: column;
  background: #3f4356;
  border-right: 1px solid #313545;
}
.p-hole { width: 61px; }
.p-drill { width: 193px; }
.p-face { width: 91px; }
.p-res { width: 140px; }
.p-block { width: 112px; }
.p-geo { width: 187px; }
.p-map { width: 136px; border-right: 0; }
.panel h2 { text-align: center; color: #eceef3; line-height: 12px; white-space: nowrap; }
.tools { display: flex; height: 53px; padding-top: 2px; color: #757989; }
.big {
  display: block;
  font-family: Roboto, "Open Sans", sans-serif;
  line-height: 10px;
  color: #6b6f81;
  text-align: center;
  align-self: flex-start;
}
.big svg { display: block; width: 22px; height: 22px; margin: 1px auto 3px; color: #737688; }
.w27 { width: 27px; }
.w28 { width: 28px; }
.w31 { width: 31px; }
.w34 { width: 34px; }
.w36 { width: 36px; }
.w40 { width: 40px; }
.w44 { width: 44px; }
.w54 { width: 54px; }
.small > div { display: flex; height: 17px; }
.small .end { justify-content: flex-end; }
.small button, .small input { width: 16px; height: 16px; flex: none; }
.small .drop { width: 8px; color: #c5c7d0; }
.small .lit { color: #9598a6; }
.small input {
  appearance: none;
  width: 10px;
  height: 10px;
  margin: 3px;
  background: #a2a5b1;
}
.small input::before {
  content: "";
  display: block;
  width: 6px;
  height: 3px;
  margin: 2px;
  border: solid #262a38;
  border-width: 0 0 2px 2px;
  transform: rotate(-45deg);
}

/* drawing tabs */
.files {
  display: flex;
  align-items: flex-end;
  height: 20px;
  padding-left: 11px;
  border-bottom: 2px solid #353841;
  background: #20242f;
}
.file {
  width: 84px;
  height: 17px;
  padding-left: 10px;
  justify-content: flex-start;
  background: #2b2f3d;
  clip-path: polygon(0 100%, 7px 0, 76px 0, 100% 100%);
}
.file.active {
  width: 89px;
  padding-left: 8px;
  gap: 12px;
  background: #3b3f4f;
  clip-path: polygon(0 100%, 7px 0, 81px 0, 100% 100%);
}
.file svg { width: 8px; height: 8px; }
.plus { width: 12px; height: 14px; background: #2b2f3d; font-size: 12px; border-radius: 3px; }

/* drawing area */
.viewport { position: relative; flex: 1; min-height: 561px; background: #fdfdff; overflow: hidden; }
.viewbar {
  display: flex;
  justify-content: space-between;
  padding: 2px 3px 2px 1px;
  color: #33343b;
}
.viewbuttons { display: flex; color: #5a5b62; }
.viewbuttons button { width: 13px; }
.viewbuttons svg { width: 10px; height: 10px; }
.model { position: absolute; left: calc(50% - 140px); top: 31px; width: 250px; height: 440px; stroke: none; }
.o1 { fill: #a4581a; }
.o2 { fill: #99500f; }
.o3 { fill: #8e4915; }
.o4 { fill: #86440a; }
.y1 { fill: #b0b812; }
.y2 { fill: #a8ad0f; }
.y3 { fill: #979e20; }
.r1 { fill: #a50008; }
.r2 { fill: #940006; }
.r3 { fill: #91000e; }
.r4 { fill: #8a0000; }
.p1 { fill: #7b00a3; }
.p2 { fill: #6e009c; }
.p3 { fill: #5f0089; }
.m1 { fill: #900060; }
.m2 { fill: #850055; }
.m3 { stroke: #7c0055; stroke-width: 2; opacity: .35; }
.viewcube { position: absolute; right: 15px; top: 42px; width: 80px; height: 100px; stroke: none; }
.viewcube text { fill: #858585; font: bold 6px "Liberation Sans", sans-serif; }
.viewcube .wcs { font-size: 7px; font-weight: normal; fill: #8b8d93; }
.cube-edge { stroke: #b2b2b2; stroke-dasharray: 5 2; }
.cube-mark { stroke: #bebebe; stroke-width: 1.5; }
.navbar { position: absolute; right: 1px; top: 154px; width: 22px; height: 140px; stroke: #dcdddf; }
.navbar rect { fill: #f5f5f7; }
.ucs { position: absolute; left: 0; bottom: 10px; width: 40px; height: 56px; }

.dialog {
  position: absolute;
  left: calc(50% - 97px);
  top: 201px;
  width: 195px;
  border: 1px solid #6d6d70;
  background: #f0f0f0;
  color: #222;
  box-shadow: 0 2px 8px #0006;
}
.dialog-title {
  display: flex;
  align-items: center;
  justify-content: space-between;
  height: 18px;
  padding: 0 4px;
  background: #fff;
}
.dialog-x svg { color: #333; }
.dialog-body { padding: 3px 4px 5px; font: 7px/12px "Liberation Sans", sans-serif; }
.field { display: flex; align-items: center; justify-content: space-between; height: 14px; }
.field input {
  width: 73px;
  height: 13px;
  border: 1px solid #75767a;
  background: linear-gradient(#333, #333) 1px 1px / 1px 9px no-repeat #fff;
}
.actions { display: flex; gap: 20px; padding: 4px 0 0 36px; }
.actions button { height: 14px; background: #e1e1e1; border: 1px solid #adadad; }
.actions .ok { width: 44px; border-color: #2376bd; }
.actions .cancel { width: 50px; }

.command {
  position: absolute;
  left: 20%;
  bottom: 0;
  width: 60%;
  font-family: "DejaVu Sans Mono", monospace;
}
.history { display: flex; flex-direction: column; align-items: flex-start; gap: 3px; padding: 0 0 4px 41px; }
.history span { background: #747476; color: #f4f4f4; line-height: 10px; padding: 0 1px; }
.cmdline { display: flex; height: 17px; background: #fff; border: 1px solid #64656c; }
.handle { display: flex; align-items: center; width: 37px; gap: 3px; padding-left: 2px; background: #4a4d5b; color: #f2f2f2; }
.handle svg { width: 10px; height: 10px; }
.handle button:last-child { margin-left: 3px; }
.handle i { width: 4px; height: 11px; border: dotted #c9cad0; border-width: 0 1px; }
.recent { width: 23px; color: #6d6e74; }
.cmdline input { flex: 1; font-style: italic; color: #444; }
.cmdline input::placeholder { color: #818288; opacity: 1; }
.expand { width: 10px; color: #555; }
.up { transform: rotate(180deg); }

/* status bar */
.status { display: flex; justify-content: space-between; height: 18px; background: #222632; }
.layouts { display: flex; align-items: flex-start; padding-left: 7px; }
.layouts button { height: 12px; padding: 0 6px 0 7px; background: #292d3a; border-radius: 0 0 5px 5px; margin-right: 1px; color: #c9cbd5; }
.layouts .active { background: #3b3f50; color: #fff; font-weight: bold; }
.state { display: flex; background: #303447; padding-right: 1px; }
.state button { width: 16px; height: 17px; }
.state .drop { width: 11px; }
.state .coords { width: 119px; padding: 0 3px 0 7px; justify-content: flex-end; color: #f1f2f6; }
.state .space { width: 35px; border: solid #222632; border-width: 0 1px; color: #f1f2f6; }
.state .rule { border-left: 1px solid #222632; }
.state .on { background: #5183b5; border-right: 1px solid #303447; }
.state .scale { width: 22px; gap: 1px; }
.state .last { width: 19px; border-left: 1px solid #222632; }
.state svg.color { width: 14px; height: 14px; }
.desk {
  height: 27px;
  background:
    linear-gradient(90deg, #202020 0, #20202000 60px, #20202000 calc(100% - 60px), #202020 100%),
    linear-gradient(#737375, #4e4e4f);
}
```
